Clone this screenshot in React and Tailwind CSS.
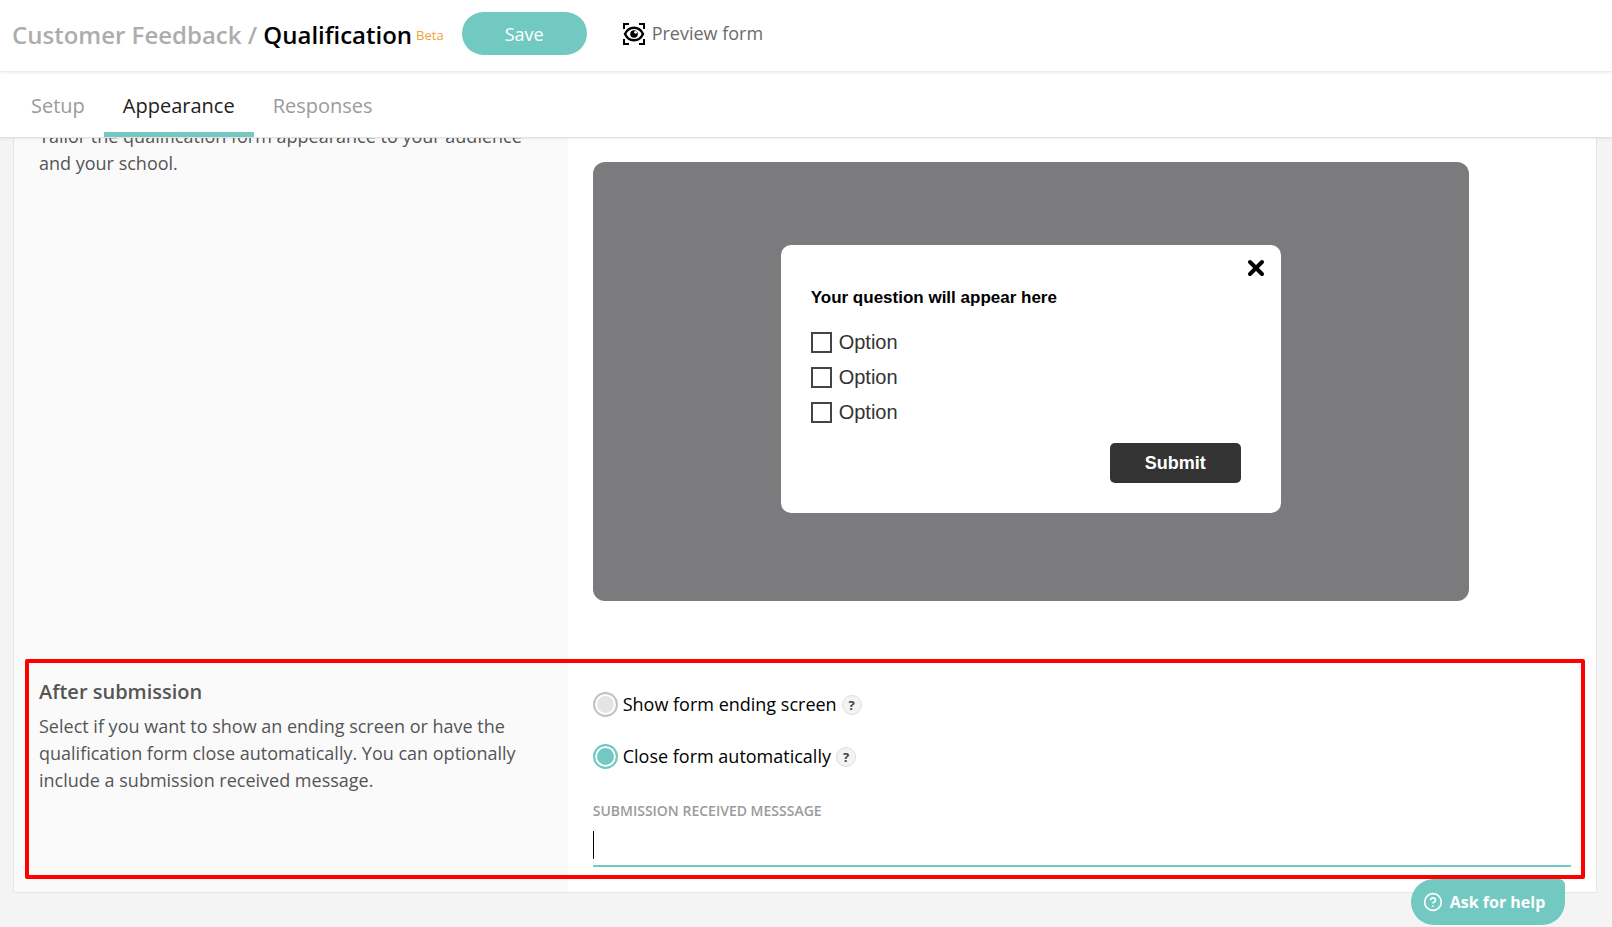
import { useState } from 'react';
import { CircleHelp, X } from 'lucide-react';

const tabs = ['Setup', 'Appearance', 'Responses'];

const endings = [
  { id: 'screen', label: 'Show form ending screen' },
  { id: 'close', label: 'Close form automatically' },
];

function PreviewIcon() {
  return (
    <svg viewBox="0 0 22 22" className="size-[22px]" fill="none" stroke="black" strokeWidth="2" aria-hidden="true">
      <path d="M1 6V1h5M16 1h5v5M21 16v5h-5M6 21H1v-5" />
      <path strokeWidth="2.4" d="M2 11C4 6.700 7.500 4.800 11 4.800s7 1.900 9 6.200c-2 4.300-5.500 6.200-9 6.200S4 15.300 2 11Z" />
      <circle cx="11" cy="11" r="3.800" fill="black" stroke="none" />
      <circle cx="12.600" cy="9.300" r="1.400" fill="white" stroke="none" />
    </svg>
  );
}

function Header() {
  return (
    <header className="relative z-20 flex h-[72px] shrink-0 items-center border-b border-[#ececec] bg-white px-3 pb-1 shadow-sm shadow-black/5">
      <h1 className="pt-0.5 text-[24px] font-semibold text-black">
        <span className="text-[#adadad]">Customer Feedback /</span> Qualification
      </h1>
      <span className="ml-1 pt-1 text-[13px] text-[#f0a23c]">Beta</span>
      <button type="button" className="ml-[18px] h-[43px] w-[125px] rounded-full bg-[#71c9c1] pt-0.5 text-[18px] text-white">
        Save
      </button>
      <a href="#preview" className="ml-9 flex items-center gap-[7px] text-[18px] text-[#6b6b6b]">
        <PreviewIcon />
        Preview form
      </a>
    </header>
  );
}

function Tabs({ active, onChange }) {
  return (
    <nav className="relative z-10 flex h-[66px] shrink-0 border-b border-[#e2e2e2] bg-white px-3 shadow-sm shadow-black/5">
      {tabs.map((tab) => (
        <button
          key={tab}
          type="button"
          onClick={() => onChange(tab)}
          className={
            tab === active
              ? 'border-b-5 border-[#71c9c1] px-[19px] pt-2 text-[20px] text-[#222]'
              : 'border-b-5 border-transparent px-[19px] pt-2 text-[20px] text-[#9b9b9b]'
          }
        >
          {tab}
        </button>
      ))}
    </nav>
  );
}

function FormPreview() {
  return (
    <div className="max-w-[876px] rounded-xl bg-[#7b7b7d] px-6 pt-[83px] pb-[88px]">
      <div className="relative mx-auto max-w-[500px] rounded-[10px] bg-white px-[30px] pt-[41px] pb-[30px] font-['Liberation_Sans',sans-serif]">
        <button type="button" aria-label="Close" className="absolute top-[11px] right-[13px]">
          <X className="size-6 text-black" strokeWidth={4} />
        </button>
        <h2 className="text-[17px] leading-6 font-bold text-black">Your question will appear here</h2>
        <div className="mt-5 flex flex-col gap-[11px]">
          {[1, 2, 3].map((n) => (
            <label key={n} className="flex items-center gap-[7px] text-[20px] leading-6 text-[#333]">
              <input type="checkbox" className="size-[21px] appearance-none border-2 border-[#444] bg-white" />
              Option
            </label>
          ))}
        </div>
        <div className="mt-[19px] flex justify-end pr-[10px]">
          <button type="button" className="h-10 w-[131px] rounded-[5px] bg-[#333] text-[18px] font-bold text-white">
            Submit
          </button>
        </div>
      </div>
    </div>
  );
}

function EndingOption({ option, checked, onChange }) {
  return (
    <div className="flex items-center gap-[5px]">
      <input
        id={option.id}
        type="radio"
        name="ending"
        checked={checked}
        onChange={onChange}
        className="size-[25px] appearance-none rounded-full border-2 border-[#bfc3c6] bg-[#e4e4e4] shadow-[inset_0_0_0_2px_white] checked:border-[#71c9c1] checked:bg-[#71c9c1]"
      />
      <label htmlFor={option.id} className="text-[18px] leading-[25px] text-black">
        {option.label}
      </label>
      <button
        type="button"
        aria-label="Help"
        className="size-5 rounded-full border border-[#dedede] bg-[#f3f3f3] text-[13px] leading-4 font-bold text-[#444]"
      >
        ?
      </button>
    </div>
  );
}

export default function App() {
  const [tab, setTab] = useState('Appearance');
  const [ending, setEnding] = useState('close');
  const [message, setMessage] = useState('');

  return (
    <div className="flex h-screen flex-col overflow-hidden bg-[#f4f4f4] font-['Open_Sans',sans-serif] text-[#555]">
      <Header />
      <Tabs active={tab} onChange={setTab} />

      <main className="pr-[15px] pl-[13px]">
        <div className="-mt-4 border border-[#e6e6e6] bg-white">
          <section className="grid grid-cols-[35fr_65fr]">
            <div className="bg-[#fafafa] px-[25px] text-[18px] leading-[27px]">
              <p>Tailor the qualification form appearance to your audience and your school.</p>
            </div>
            <div className="px-[25px] pt-[39px] pb-[58px]">
              <FormPreview />
            </div>
          </section>

          <section className="relative grid grid-cols-[35fr_65fr]">
            <div className="bg-[#fafafa] px-[25px] pt-[19px] text-[18px] leading-[27px]">
              <h2 className="mb-2 text-[20px] font-semibold">After submission</h2>
              <p>
                Select if you want to show an ending screen or have the qualification form close automatically. You can
                optionally include a submission received message.
              </p>
            </div>
            <div className="px-[25px] pt-[33px] pb-[25px]">
              <div className="flex flex-col gap-[27px]">
                {endings.map((o) => (
                  <EndingOption key={o.id} option={o} checked={ending === o.id} onChange={() => setEnding(o.id)} />
                ))}
              </div>
              <label htmlFor="message" className="mt-8 block text-[14px] leading-5 font-semibold text-[#9b9b9b] uppercase">
                Submission received messsage
              </label>
              <div className="mt-1 flex h-[42px] items-center border-b-2 border-[#71c9c1]">
                <span className="h-7 w-px bg-black" />
                <input
                  id="message"
                  type="text"
                  value={message}
                  onChange={(e) => setMessage(e.target.value)}
                  className="h-full flex-1 bg-transparent text-[18px] outline-none"
                />
              </div>
            </div>
            <div className="pointer-events-none absolute inset-x-[11px] top-0 bottom-[13px] rounded-xs border-4 border-[#ff0000]" />
          </section>
        </div>
      </main>

      <button
        type="button"
        className="fixed right-[47px] bottom-0.5 z-20 flex h-[46px] w-[154px] items-center justify-center gap-[7px] rounded-[23px] rounded-tr-md bg-[#71c9c1] pr-2 text-[16px] font-bold text-white"
      >
        <CircleHelp className="size-5" strokeWidth={2} />
        Ask for help
      </button>
    </div>
  );
}
